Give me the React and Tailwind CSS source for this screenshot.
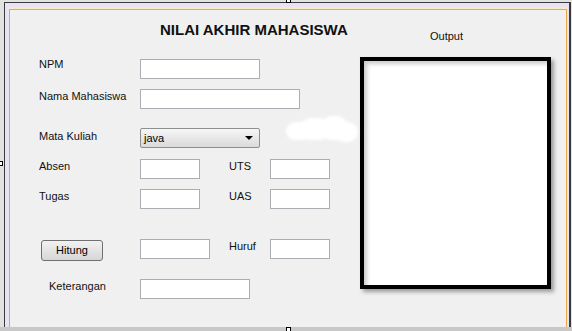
import React from 'react';

const Box = ({ w }) => <div className={`h-5 shrink-0 bg-white border border-[#abadb3] ${w}`} />;

const Label = ({ children, w = 'w-[101px]', extra = '' }) => (
    <div className={`shrink-0 text-[11px] leading-[14px] text-[#111] whitespace-nowrap ${w} ${extra}`}>{children}</div>
);

const Handle = ({ pos }) => <div className={`absolute w-[5px] h-[5px] bg-white border border-black ${pos}`} />;

const App = () => {
    return (
        <div className="relative w-[572px] h-[331px] overflow-hidden bg-[#c8c8c8] flex flex-col font-['Liberation_Sans',Arial,sans-serif]">
            <div className="h-[327px] shrink-0 bg-[#e2e2e2] pt-[2px] pl-[4px] pr-[1px]">
                <div className="h-full border-l border-t border-r-2 border-[#3a3a3a] bg-[#e6e3f5] pt-[4px] pl-[4px] pr-[2px]">
                    <div className="h-full border-t-2 border-[#fbe9c0]">
                        <div className="h-full border-l border-t border-r border-[#e9a84a] bg-[#f0f0f0] flex">
                            {/* form */}
                            <div className="w-[340px] shrink-0 flex flex-col">
                                <div className="pt-[11px] pl-[150px] text-[15px] leading-[18px] font-bold text-[#111] whitespace-nowrap">
                                    NILAI AKHIR MAHASISWA
                                </div>
                                <div className="mt-[20px] pl-[29px] flex flex-col">
                                    <div className="flex items-start">
                                        <Label extra="-mt-[2px]">NPM</Label>
                                        <Box w="w-[120px]" />
                                    </div>
                                    <div className="mt-[10px] flex items-start">
                                        <Label>Nama Mahasiswa</Label>
                                        <Box w="w-[160px]" />
                                    </div>
                                    <div className="mt-[19px] flex items-start">
                                        <Label extra="mt-[1px]">Mata Kuliah</Label>
                                        <div className="w-[120px] h-5 shrink-0 flex items-center justify-between pl-[3px] pr-[6px] rounded-[2px] border border-[#8e8f8f] bg-gradient-to-b from-[#f6f6f6] to-[#dadada] text-[11px] text-black">
                                            <span>java</span>
                                            <span className="w-0 h-0 border-l-[4px] border-r-[4px] border-t-[4px] border-l-transparent border-r-transparent border-t-black" />
                                        </div>
                                    </div>
                                    <div className="mt-[11px] flex items-start">
                                        <Label>Absen</Label>
                                        <Box w="w-[60px]" />
                                        <Label w="w-[41px]" extra="ml-[29px]">UTS</Label>
                                        <Box w="w-[60px]" />
                                    </div>
                                    <div className="mt-[10px] flex items-start">
                                        <Label>Tugas</Label>
                                        <Box w="w-[60px]" />
                                        <Label w="w-[41px]" extra="ml-[29px]">UAS</Label>
                                        <Box w="w-[60px]" />
                                    </div>
                                    <div className="mt-[30px] flex items-start">
                                        <div className="w-[101px] shrink-0 pl-[2px] pt-[1px]">
                                            <div className="w-[62px] h-[21px] flex items-center justify-center rounded-[3px] border border-[#707070] bg-gradient-to-b from-[#f2f2f2] to-[#d6d6d6] text-[11px] text-black">
                                                Hitung
                                            </div>
                                        </div>
                                        <Box w="w-[70px]" />
                                        <Label w="w-[41px]" extra="ml-[19px]">Huruf</Label>
                                        <Box w="w-[60px]" />
                                    </div>
                                    <div className="mt-[18px] flex items-start">
                                        <Label extra="pl-[10px]">Keterangan</Label>
                                        <Box w="w-[110px]" />
                                    </div>
                                </div>
                            </div>
                            {/* output */}
                            <div className="flex-1 flex flex-col">
                                <div className="pt-[19px] pl-[80px] text-[11px] leading-[14px] text-[#111]">Output</div>
                                <div className="mt-[14px] ml-[10px] w-[191px] h-[232px] border-4 border-black bg-white shadow-[3px_3px_4px_rgba(0,0,0,0.35),inset_3px_3px_4px_rgba(0,0,0,0.2)]" />
                            </div>
                        </div>
                    </div>
                </div>
            </div>

            {/* white smudge */}
            <div className="absolute left-[286px] top-[116px] w-[72px] h-[28px] blur-[1.5px]">
                <div className="absolute left-[0px] top-[6px] w-[26px] h-[18px] rounded-full bg-white" />
                <div className="absolute left-[14px] top-[2px] w-[30px] h-[22px] rounded-full bg-white" />
                <div className="absolute left-[34px] top-[0px] w-[28px] h-[24px] rounded-full bg-white" />
                <div className="absolute left-[48px] top-[6px] w-[24px] h-[20px] rounded-full bg-white" />
            </div>

            <Handle pos="left-[286px] -top-[2px]" />
            <Handle pos="-left-[2px] top-[161px]" />
            <Handle pos="left-[286px] top-[327px]" />
        </div>
    );
};

export default App;
